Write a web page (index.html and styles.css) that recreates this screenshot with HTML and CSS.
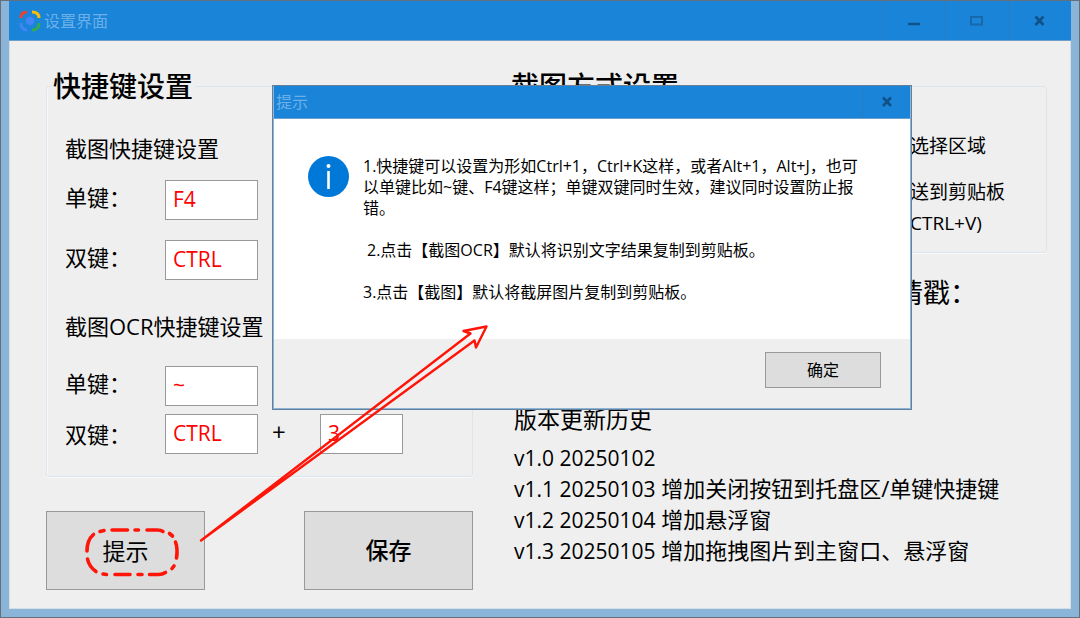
FILE: index.html
```html
<!DOCTYPE html>
<html lang="zh-CN">
<head>
<meta charset="utf-8">
<title>设置界面</title>
<link rel="stylesheet" href="styles.css">
</head>
<body>
<div class="window">
  <header class="titlebar">
    <svg class="logo" viewBox="0 0 22 22" fill="none" stroke-width="3" aria-hidden="true">
      <path d="M2 8V7Q2 2 8 2" stroke="#ea4335"/>
      <path d="M13 2Q20 2 20 8" stroke="#fbbc05"/>
      <path d="M2 13Q2 20 8 20" stroke="#4285f4"/>
      <path d="M20 13Q20 20 13 20" stroke="#34a853"/>
      <circle cx="11" cy="11" r="4.3" fill="#4285f4"/>
    </svg>
    <h1 class="title">设置界面</h1>
    <div class="controls">
      <button class="control" type="button" aria-label="最小化"><svg viewBox="0 0 14 14" class="glyph"><path d="M1 10h12" stroke-width="2.500"/></svg></button>
      <button class="control dim" type="button" aria-label="最大化"><svg viewBox="0 0 14 14" class="glyph"><path d="M1 3h11v7.500H1z" stroke-width="2"/></svg></button>
      <button class="control" type="button" aria-label="关闭"><svg viewBox="0 0 14 14" class="glyph"><path d="M2.500 2.500l8 8.500M10.500 2.500l-8 8.500" stroke-width="2.600"/></svg></button>
    </div>
  </header>

  <main class="content">
    <section class="left">
      <fieldset class="group">
        <legend class="legend">快捷键设置</legend>
        <h2 class="subhead">截图快捷键设置</h2>
        <div class="row">
          <label class="label" for="shot-single">单键：</label>
          <input class="field" id="shot-single" type="text" value="F4">
        </div>
        <div class="row spaced">
          <label class="label" for="shot-double">双键：</label>
          <input class="field" id="shot-double" type="text" value="CTRL">
        </div>
        <h2 class="subhead second">截图OCR快捷键设置</h2>
        <div class="row">
          <label class="label" for="ocr-single">单键：</label>
          <input class="field" id="ocr-single" type="text" value="~">
        </div>
        <div class="row tight">
          <label class="label" for="ocr-double">双键：</label>
          <input class="field" id="ocr-double" type="text" value="CTRL">
          <span class="plus">+</span>
          <input class="field short" type="text" value="3" aria-label="双键第二键">
        </div>
      </fieldset>
      <div class="actions">
        <button class="button tip" type="button">提示</button>
        <button class="button save" type="button">保存</button>
      </div>
    </section>

    <section class="right">
      <fieldset class="group modes">
        <legend class="legend">截图方式设置</legend>
        <p class="mode">选择区域</p>
        <p class="mode send">送到剪贴板<br>CTRL+V)</p>
      </fieldset>
      <p class="poke">请戳：</p>
      <h2 class="history-title">版本更新历史</h2>
      <ul class="history">
        <li><span class="version">v1.0 20250102</span></li>
        <li><span class="version">v1.1 20250103</span> 增加关闭按钮到托盘区/单键快捷键</li>
        <li><span class="version">v1.2 20250104</span> 增加悬浮窗</li>
        <li><span class="version">v1.3 20250105</span> 增加拖拽图片到主窗口、悬浮窗</li>
      </ul>
    </section>
  </main>

  <div class="dialog" role="dialog" aria-labelledby="dialog-title">
    <header class="dialog-bar">
      <h2 class="title" id="dialog-title">提示</h2>
      <button class="control small" type="button" aria-label="关闭提示"><svg viewBox="0 0 14 14" class="glyph"><path d="M3 2.500l8 8.500M11 2.500l-8 8.500" stroke-width="2.600"/></svg></button>
    </header>
    <div class="dialog-body">
      <svg class="info" viewBox="0 0 41 41" aria-hidden="true">
        <circle cx="20.500" cy="20.500" r="20.500" fill="#0078d7"/>
        <circle cx="20.500" cy="10" r="2" fill="#fff"/>
        <path d="M20.500 15v18" stroke="#fff" stroke-width="2.600"/>
      </svg>
      <div class="message">
        <p>1.快捷键可以设置为形如Ctrl+1，Ctrl+K这样，或者Alt+1，Alt+J，也可<br>以单键比如~键、F4键这样；单键双键同时生效，建议同时设置防止报<br>错。</p>
        <p class="inset">2.点击【截图OCR】默认将识别文字结果复制到剪贴板。</p>
        <p>3.点击【截图】默认将截屏图片复制到剪贴板。</p>
      </div>
    </div>
    <footer class="dialog-foot">
      <button class="button ok" type="button">确定</button>
    </footer>
  </div>

  <svg class="marks" width="1080" height="618" viewBox="0 0 1080 618" fill="none" stroke="#ff1408" stroke-linecap="round" stroke-linejoin="round" aria-hidden="true">
    <path stroke-width="2.400" d="M201 540.500L470.500 333.500L463.500 331L486.500 326.500L476 347.500L474.500 340.500Z"/>
    <path stroke-width="3.600" d="M112 530h15.500M135 530h3.500M147 530h10q4 0 6 1.500M169.500 533.500l3 2.500M175.500 542q2.500 7 1 16M174 566l-2 2.500M165.500 572.500q-3 2-7 2h-9M142 574.500h-4M130 574.500h-15M106.500 574.500l-3.500-.5M96 571.500q-7-5-8.500-12.500M87 551q0-11 6.500-16.500M100 531.500l4-1"/>
  </svg>
</div>
</body>
</html>
```
FILE: styles.css
```css
* { box-sizing: border-box; }

body {
  margin: 0;
  font-family: "Open Sans", "Noto Sans CJK SC", sans-serif;
  font-size: 22px;
  color: #000;
}

h1, h2, p, ul { margin: 0; padding: 0; font-weight: 400; }
button, input { font-family: inherit; }

.window {
  position: relative;
  display: flex;
  flex-direction: column;
  min-height: 100vh;
  padding: 0 8px 8px;
  border: 1px solid #65707c;
  background: #8ab4d8;
}

.titlebar {
  display: flex;
  align-items: center;
  height: 40px;
  padding-left: 10px;
  background: #1a84d9;
  border-bottom: 1px solid #6f9fc9;
}

.logo { width: 22px; height: 22px; }

.title {
  flex: 1;
  font-size: 16px;
  line-height: 20px;
  color: #6bb0e8;
}

.titlebar .title { margin-left: 3px; }

.controls { display: flex; align-self: stretch; }

.control {
  display: flex;
  align-items: center;
  justify-content: center;
  width: 63px;
  padding: 0;
  border: 0;
  border-left: 1px solid #2b7cc0;
  background: transparent;
  color: #0f5288;
}

.control.dim { color: #1769ab; }
.control.small { width: 47px; }
.glyph { width: 14px; height: 14px; fill: none; stroke: currentColor; }

.content {
  flex: 1;
  display: grid;
  grid-template-columns: 427px 1fr;
  column-gap: 31px;
  padding: 30px 23px 18px 36px;
  border: 1px solid #d6dee6;
  border-top: 0;
  background: #efefef;
}

.group {
  margin: 0;
  padding: 0 18px 22px;
  border: 1px solid #dce5ec;
  border-radius: 3px;
  box-shadow: inset 1px 0 #f8f8f8, 0 1px #f8f8f8;
}

.legend {
  margin-left: -14px;
  padding: 0 2px;
  font-size: 28px;
  line-height: 30px;
  font-weight: 500;
}

.subhead { margin-top: 31px; font-size: 22px; line-height: 32px; }
.subhead + .row { margin-top: 16px; }
.subhead.second { margin-top: 30px; }
.subhead.second + .row { margin-top: 24px; }

.row { display: flex; align-items: center; }
.row.spaced { margin-top: 20px; }
.row.tight { margin-top: 8px; }

.label { width: 100px; padding-bottom: 6px; line-height: 32px; }
.tight .label { padding-bottom: 0; }

.field {
  width: 93px;
  height: 40px;
  padding: 0 7px 2px;
  border: 1px solid #999;
  background: #fff;
  color: #f00;
  font-size: 21px;
}

.field.short { width: 83px; }
.plus { width: 62px; padding: 0 0 4px 14px; font-size: 24px; line-height: 32px; }

.actions {
  display: flex;
  justify-content: space-between;
  margin-top: 34px;
}

.button {
  padding: 0 0 2px;
  border: 1px solid #999;
  background: #ddd;
  color: #000;
  font-size: 23px;
}

.tip { width: 159px; height: 79px; }
.save { width: 169px; height: 79px; padding-bottom: 4px; font-weight: 500; }

.group.modes { min-height: 182px; padding-bottom: 12px; }
.mode { padding-left: 387px; font-size: 19px; line-height: 31px; margin-top: 30px; }
.mode.send { margin-top: 15px; white-space: nowrap; }

.poke { margin-top: 21px; padding-left: 392px; font-size: 27px; line-height: 38px; }

.history-title { margin-top: 91px; padding-left: 10px; font-size: 23px; line-height: 32px; }
.history { margin-top: 7px; padding-left: 10px; list-style: none; line-height: 31px; white-space: nowrap; }
.version { font-size: 21px; line-height: 20px; }

.dialog {
  position: absolute;
  top: 84px;
  left: 271px;
  width: 640px;
  border: 1px solid #65809a;
  box-shadow: inset 0 0 0 1px #8ab4d8;
  padding: 0 1px 1px;
}

.dialog-bar {
  display: flex;
  align-items: center;
  height: 33px;
  padding-left: 2px;
  background: #1a84d9;
  border-bottom: 1px solid #6f9fc9;
}

.dialog-bar .control { align-self: stretch; }

.dialog-body {
  display: flex;
  gap: 14px;
  padding: 37px 20px 36px 34px;
  background: #fff;
}

.info { flex: none; width: 41px; height: 41px; }

.message { font-size: 16px; line-height: 21px; white-space: nowrap; }
.message p + p { margin-top: 21px; }
.message .inset { padding-left: 4px; }

.dialog-foot {
  display: flex;
  justify-content: flex-end;
  padding: 13px 29px 20px;
  background: #efefef;
}

.ok { width: 116px; height: 36px; font-size: 16px; }

.marks { position: absolute; top: -1px; left: -1px; pointer-events: none; }
```
